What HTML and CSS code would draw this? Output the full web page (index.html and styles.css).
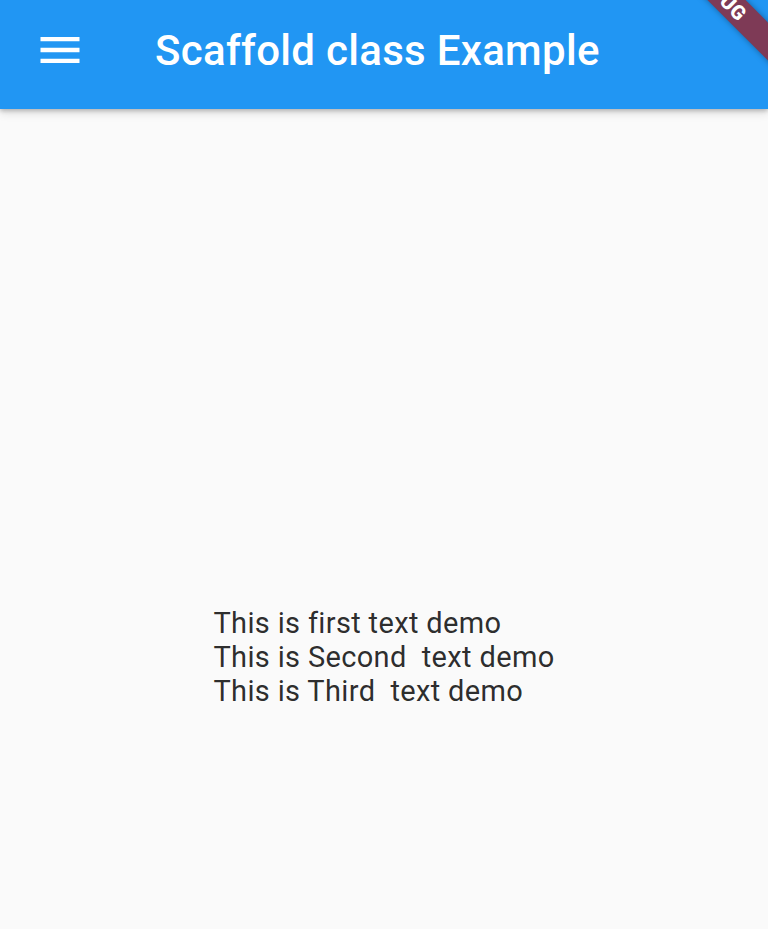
FILE: index.html
```
<!DOCTYPE html>
<html>
<head>
<meta charset="utf-8">
<link rel="stylesheet" href="styles.css">
</head>
<body>
<div class="screen">
  <header class="appbar">
    <svg class="menu-icon" viewBox="0 0 24 24" width="52" height="52"><path d="M3 18h18v-2H3v2zm0-5h18v-2H3v2zm0-7v2h18V6H3z" fill="#fff"/></svg>
    <h1 class="title">Scaffold class Example</h1>
  </header>
  <main class="body">
    <div class="texts">
      <div class="line">This is first text demo</div>
      <div class="line">This is Second  text demo</div>
      <div class="line">This is Third  text demo</div>
    </div>
  </main>
  <div class="banner"><span>DEBUG</span></div>
</div>
</body>
</html>
```
FILE: styles.css
```
html, body {
  margin: 0;
  padding: 0;
}
body {
  width: 768px;
  height: 929px;
  overflow: hidden;
  background: #fafafa;
  font-family: Roboto, "Liberation Sans", sans-serif;
}
.screen {
  position: relative;
  width: 768px;
  height: 929px;
  overflow: hidden;
  display: flex;
  flex-direction: column;
}
.appbar {
  height: 109px;
  box-sizing: border-box;
  padding-bottom: 8px;
  background: #2196f3;
  display: flex;
  align-items: center;
  box-shadow: 0 2px 4px rgba(0,0,0,0.2), 0 4px 9px rgba(0,0,0,0.12);
  position: relative;
  z-index: 1;
  flex: none;
}
.menu-icon {
  margin-left: 33.5px;
  margin-top: -1px;
  flex: none;
  display: block;
}
.title {
  margin: 0 0 0 69.5px;
  color: #fff;
  font-size: 42px;
  font-weight: 500;
  letter-spacing: 0.3px;
  line-height: 47px;
}
.body {
  flex: 1;
  display: flex;
  justify-content: center;
  align-items: flex-start;
  padding-top: 497px;
}
.texts {
  color: rgba(0,0,0,0.84);
  font-size: 29px;
  line-height: 34px;
  letter-spacing: 0.35px;
}
.line {
  white-space: pre;
}
.banner {
  position: absolute;
  left: 620px;
  top: -20.5px;
  width: 200px;
  height: 27px;
  background: #7e3a56;
  transform: rotate(45deg);
  transform-origin: 50% 50%;
  display: flex;
  align-items: center;
  justify-content: center;
  z-index: 2;
  box-shadow: 0 0 6px rgba(0,0,0,0.35);
}
.banner span {
  color: #fff;
  font-size: 20px;
  font-weight: 900;
  line-height: 20px;
  letter-spacing: 0.5px;
}
```
